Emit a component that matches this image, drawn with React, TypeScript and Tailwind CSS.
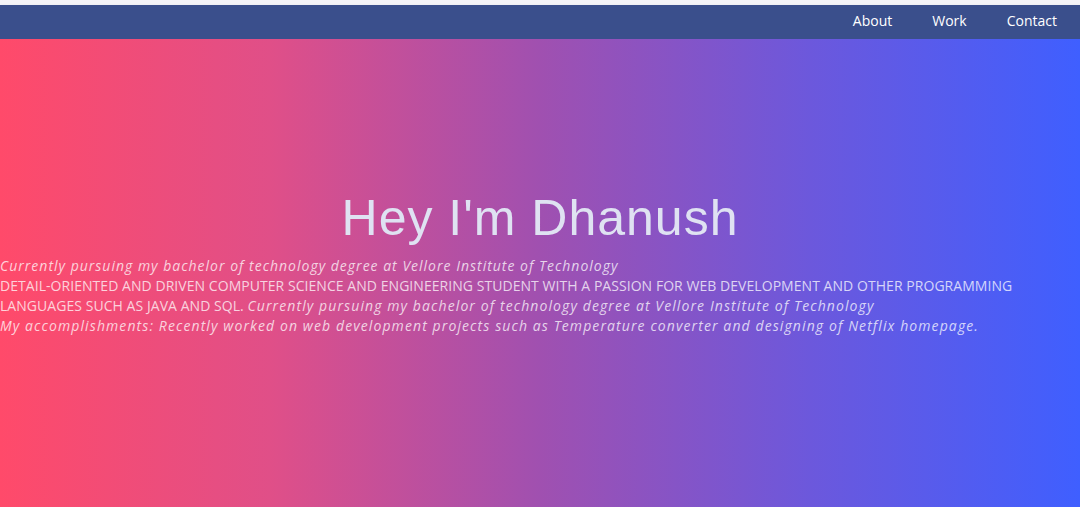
export default function App() {
  return (
    <div className="h-[507px] w-full overflow-hidden bg-[#f4f4f8] pt-[5px] font-['Open_Sans',sans-serif]">
      <nav className="flex h-[34px] items-center justify-end gap-[40px] bg-[#3a4f8c] pb-[3px] pr-[23px] text-[14px] text-white shadow-[0_2px_3px_rgba(0,0,0,0.35)]">
        <a href="#about">About</a>
        <a href="#work">Work</a>
        <a href="#contact">Contact</a>
      </nav>
      <section className="h-[468px] bg-[linear-gradient(90deg,#ff4a6a_0%,#e04f88_25%,#a050b0_50%,#6c58dc_75%,#3f5fff_100%)] pt-[150px]">
        <h1 className="text-center font-['Liberation_Sans',sans-serif] text-[50px] leading-[58px] tracking-[1px] text-[#dfe2f2]">
          Hey I&apos;m Dhanush
        </h1>
        <div className="mt-[9px] text-[14px] leading-[20px] text-white/75">
          <p className="italic tracking-[1px]">
            Currently pursuing my bachelor of technology degree at Vellore Institute of Technology
          </p>
          <p className="uppercase tracking-[0.05px]">
            Detail-oriented and driven computer science and engineering student with a passion for web development and other programming languages such as Java and SQL.{' '}
            <span className="normal-case italic tracking-[1.1px]">
              Currently pursuing my bachelor of technology degree at Vellore Institute of Technology
            </span>
          </p>
          <p className="italic tracking-[1.1px]">
            My accomplishments: Recently worked on web development projects such as Temperature converter and designing of Netflix homepage.
          </p>
        </div>
      </section>
    </div>
  );
}
